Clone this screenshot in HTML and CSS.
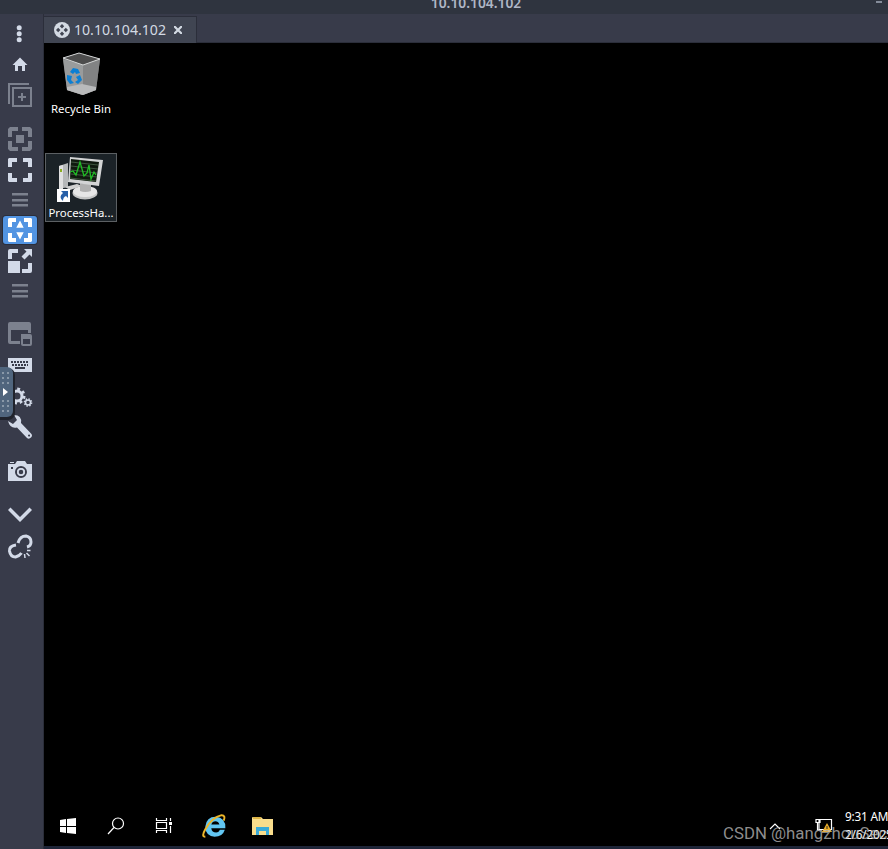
FILE: index.html
```html
<!DOCTYPE html>
<html>
<head>
  <meta charset="utf-8">
  <title>10.10.104.102</title>
  <link rel="stylesheet" href="styles.css">
</head>
<body>
  <div class="window">
    <div class="titlebar">
      <span class="title">10.10.104.102</span>
      <i class="minimize"></i>
    </div>
    <div class="content">
      <div class="sidebar">
        <div class="group">
          <svg class="tool" viewBox="0 0 24 24"><circle cx="11.200" cy="6.800" r="2.500"/><circle cx="11.200" cy="12.800" r="2.500"/><circle cx="11.200" cy="18.700" r="2.500"/></svg>
          <svg class="tool" viewBox="0 0 24 24"><path d="M12 5.500 19.500 13H17v6h-3v-5h-4v5H7v-6H4.500z"/></svg>
          <svg class="tool dim" viewBox="0 0 24 24"><path d="M0 0h21v2H2v19H0zM4 4h20v20H4zM6 6v16h16V6zM13 10h2v3h3v2h-3v3h-2v-3h-3v-2h3z" fill-rule="evenodd"/></svg>
        </div>
        <div class="group">
          <svg class="tool dim" viewBox="0 0 24 24"><path d="M2 0h8v4H4v6H0V2zM14 0h8l2 2v8h-4V4h-6zM0 14h4v6h6v4H2l-2-2zM20 14h4v8l-2 2h-8v-4h6zM8 8h8v8H8z"/></svg>
          <svg class="tool" viewBox="0 0 24 24"><path d="M1 0h8v4H4v5H0V1zM15 0h8l1 1v8h-4V4h-5zM0 15h4v5h5v4H1l-1-1zM20 15h4v8l-1 1h-8v-4h5z"/></svg>
          <i class="handle"></i>
          <div class="active">
            <svg class="tool" viewBox="0 0 24 24"><path d="M1 0h7v4H4v5H0V1zM16 0h7l1 1v8h-4V4h-4zM0 15h4v5h4v4H1l-1-1zM20 15h4v8l-1 1h-7v-4h4zM12 2.500l3.700 7.300H8.300zM12 21.500l3.700-7.300H8.300z"/></svg>
          </div>
          <svg class="tool" viewBox="0 0 24 24"><path d="M0 12h12v12H0zM0 2q0-2 2-2h8v4H4v6H0zM16 0h8v8l-2.500-2.500-5 5-3-3 5-5zM20 14h4v8q0 2-2 2h-8v-4h6z"/></svg>
          <i class="handle"></i>
        </div>
        <div class="group">
          <svg class="tool dim" viewBox="0 0 24 24"><path d="M2 0h19q2 0 2 2v9h-3V8H3v11h9v3H2q-2 0-2-2V2q0-2 2-2zM13 12h9q2 0 2 2v8q0 2-2 2h-7q-2 0-2-2zM15 17v5h7v-5z" fill-rule="evenodd"/></svg>
          <svg class="tool" viewBox="0 0 24 24"><path d="M0 5h24v14H0z"/><path class="cut" d="M3 9h18M4 12h16" stroke-dasharray="2 1"/><path class="cut" d="M7 15h10"/></svg>
          <svg class="tool" viewBox="0 0 24 24"><circle class="line" cx="9" cy="12" r="5"/><circle class="line" cx="9" cy="12" r="7" stroke-dasharray="2.750 2.750"/><circle class="line thin" cx="20" cy="18.500" r="2.500"/><circle class="line thin" cx="20" cy="18.500" r="3.600" stroke-dasharray="1.400 1.430"/></svg>
          <svg class="tool" viewBox="0 0 24 24"><path d="M6 0q8 0 7 8l10 10.500q2 2 0 4-2 2-4 .5L9 12.500Q2 14 0 6l5 3 4-4zM21 19.500a1 1 0 1 0 .1 0z" fill-rule="evenodd"/></svg>
        </div>
        <div class="group">
          <svg class="tool" viewBox="0 0 24 24"><path d="M0 5h7l2-3h8l2 3h5v17H0zM2 3h4v1H2z"/><circle class="cut" cx="13" cy="13" r="5"/><circle class="cut core" cx="13" cy="13" r="3"/><path class="cut" d="M3 9h2"/></svg>
        </div>
        <div class="group">
          <svg class="tool" viewBox="0 0 24 24"><path d="M0 7l2.500-2.500L12 14l9.500-9.500L24 7 12 19z"/></svg>
          <svg class="tool" viewBox="0 0 24 24"><path class="link" d="M10 9q2-7 8-7 5 1 5 6 0 4-4 5M8 11q-7 1-6.500 6 1 6 6 6 4-1 6-4"/><path class="line thin" d="M16.500 20l.5 4M18.500 19l3 3M19 16.500h3.500"/></svg>
        </div>
        <div class="drawer">
          <i class="grip"></i><i class="arrow"></i><i class="grip"></i>
        </div>
      </div>
      <div class="main">
        <div class="tabs">
          <div class="tab">
            <svg class="tab-icon" viewBox="0 0 16 16"><circle cx="8" cy="8" r="8"/><path d="M8 2l2.200 2.200L8 6.400 5.800 4.200zM8 9.600l2.200 2.200L8 14l-2.200-2.200zM4.200 5.800L6.400 8l-2.200 2.200L2 8zM11.800 5.800L14 8l-2.200 2.200L9.600 8z"/></svg>
            <span class="tab-name">10.10.104.102</span>
            <svg class="close" viewBox="0 0 8 8"><path d="M0 0l8 8M8 0L0 8"/></svg>
          </div>
        </div>
        <div class="desktop">
          <div class="shortcuts">
            <div class="shortcut">
              <svg class="bin" viewBox="0 0 40 44">
                <path d="M1 6l16-5 21 6-4 31-14 5-15-5z" fill="#77797a"/>
                <path d="M1 6l16-5 21 6-17 6z" fill="#4d4d4d"/>
                <path d="M1 7l20 6v30L5 38z" fill="#999b9c"/>
                <path d="M21 13l17-6-4 31-13 5z" fill="#828384"/>
                <path d="M5 35l15-3 14 3v3l-13 5-16-5z" fill="#b9babb"/>
                <path d="M1 6l16-5 21 6-17 6z" fill="none" stroke="#d3d5d5"/>
                <path d="M8 20l3-4 5 1 2 4-4 1-1-2-2 2zM5 23l5 1-1 4 3 3-4 1-3-4zM14 25l4-2 2 5-4 4-3-2 3-2z" fill="#0b7fd4"/>
              </svg>
              <span>Recycle Bin</span>
            </div>
            <div class="shortcut selected">
              <svg class="monitor" viewBox="0 0 48 48">
                <path d="M2 11l9-3v24l-9 2z" fill="#b6b8b9"/>
                <path d="M2 11l4-1v24H2z" fill="#e0e0e0"/>
                <path d="M3 14h2v3H3z" fill="#8bad23"/>
                <path d="M8 32l12-3 5 2-12 4z" fill="#d0d0d0"/>
                <ellipse cx="28" cy="38" rx="12.500" ry="6.500" fill="#c4c5c5"/>
                <ellipse cx="28" cy="36.500" rx="12" ry="5.500" fill="#e6e6e6"/>
                <path d="M23 28l11 1v7q-6 2-11 0z" fill="#b0b0b0"/>
                <path d="M13 2l33 3-4 26-31-4z" fill="#d3d4d5"/>
                <path d="M14 4l28 3-3 20-26-3z" fill="#10190f"/>
                <path d="M14 7l27 3M14 11l27 3M14 15l26 3M14 19l26 3M13 23l26 3" fill="none" stroke="#3f553f"/>
                <path d="M13 17l3-1 3 4 4-13 4 14 3-3 2-8 2 14 3-7 2 3" fill="none" stroke="#20be25" stroke-width="1.300"/>
                <path d="M0 34h13v13H0z" fill="#fff"/>
                <path d="M4 36l7 0v7l-2-2q-3 1-3 5-5-4 0-8z" fill="#2860a8"/>
              </svg>
              <span>ProcessHa...</span>
            </div>
          </div>
          <div class="taskbar">
            <svg class="app" viewBox="0 0 24 24"><path d="M4 6l6-1v7H4zM11 5l9-1v8h-9zM4 13h6v6l-6-1zM11 13h9v7l-9-1z" fill="#fff"/></svg>
            <svg class="app" viewBox="0 0 24 24"><path d="M10 13.500L4 20" class="outline"/><circle cx="14" cy="9.500" r="5.500" class="outline"/></svg>
            <svg class="app" viewBox="0 0 24 24"><path d="M4.500 4v2.500h10V4M4.500 19v-2.500h10V19M4.500 8.500h10v6h-10zM18.500 4v3M18.500 12v7" class="outline"/><path d="M17 8h3v3h-3z" fill="#fff"/></svg>
            <svg class="app ie" viewBox="0 0 24 24"><path d="M22 15.500q-2 6.500-9.500 6.500-8.500-1-8.500-9.500 1-9 9.500-9 9.500 1 9 10.500H9.500q.5 4 4.500 4 2.500 0 3.500-2.500zM9.500 10.500h7.500q-1-3-3.700-3t-3.800 3z" fill="#62c6f2" fill-rule="evenodd"/><path d="M4 22q-4 0 0-7Q10 4 19 2q4 0 2 5" fill="none" stroke="#edb629" stroke-width="1.800"/></svg>
            <svg class="app" viewBox="0 0 24 24"><path d="M1 4q0-1 1-1h8l2 2h10v16H1z" fill="#f9dd8c"/><path d="M2 3h8v2H2z" fill="#deb648"/><path d="M5 13h13v8h-3v-4H8v4H5z" fill="#39abd9"/></svg>
            <div class="tray">
              <svg class="chevron" viewBox="0 0 12 7"><path d="M1 6l5-5 5 5" class="outline"/></svg>
              <svg class="network" viewBox="0 0 18 16"><path d="M4 1.500h12.500v10H4zM1 1.500h4v3H1zM2.500 5v7h4M7 14h6" class="outline"/><path d="M12 5l5 9H7z" fill="#e9ac29"/><path d="M12 8v3M12 12v1" stroke="#222"/></svg>
              <div class="clock">
                <span>9:31 AM</span>
                <span>2/6/2025</span>
              </div>
            </div>
          </div>
          <span class="watermark">CSDN @hangzhouSec</span>
        </div>
        <div class="bottom"></div>
      </div>
    </div>
  </div>
</body>
</html>
```

FILE: styles.css
```css
* {
  box-sizing: border-box;
}
body {
  margin: 0;
  overflow: hidden;
  background: #383b4a;
  font-family: "Noto Sans", sans-serif;
}
.window {
  display: flex;
  flex-direction: column;
  width: 888px;
  height: 849px;
  overflow: hidden;
}
.titlebar {
  display: flex;
  flex: none;
  height: 14px;
  padding-left: 64px;
  justify-content: center;
  background: #2f343f;
  position: relative;
  overflow: hidden;
}
.title {
  margin-top: -7px;
  color: #b0b7c6;
  font-size: 13.8px;
  font-weight: 600;
  line-height: 20px;
}
.minimize {
  position: absolute;
  top: 1px;
  right: 6px;
  width: 6px;
  height: 2px;
  background: #858c9a;
}
.content {
  display: flex;
  flex: 1;
  min-height: 0;
}
.sidebar {
  position: relative;
  display: flex;
  flex: none;
  flex-direction: column;
  gap: 20px;
  width: 44px;
  padding: 7px 0 0 8px;
  border-right: 1px solid #2b2e3a;
}
.group {
  display: flex;
  flex-direction: column;
  gap: 7px;
}
.tool {
  display: block;
  width: 24px;
  height: 24px;
  fill: #d3dae8;
  overflow: visible;
}
.tool.dim {
  fill: #7c818e;
}
.tool .line, .tool .link {
  fill: none;
  stroke: #d3dae8;
  stroke-width: 3;
}
.tool .thin {
  stroke-width: 1.5;
}
.tool .cut {
  fill: none;
  stroke: #383b4a;
  stroke-width: 2;
}
.tool .core {
  stroke-width: 1.5;
  fill: #383b4a;
  stroke: #d3dae8;
}
.handle {
  width: 16px;
  height: 22px;
  margin-left: 4px;
  background: linear-gradient(#7c818e 0 0) 0 4px / 16px 2.5px no-repeat,
    linear-gradient(#7c818e 0 0) 0 10px / 16px 2.5px no-repeat,
    linear-gradient(#7c818e 0 0) 0 15px / 16px 2.5px no-repeat;
}
.active {
  width: 34px;
  margin: -2px 0 -2px -5px;
  padding: 2px 5px;
  border-radius: 3px;
  background: #5294e2;
  box-shadow: 0 0 0 1px #2b2e3a;
}
.active .tool {
  fill: #fff;
}
.drawer {
  position: absolute;
  top: 353px;
  left: 0;
  display: flex;
  flex-direction: column;
  justify-content: center;
  align-items: center;
  gap: 4px;
  width: 13px;
  height: 50px;
  padding-right: 3px;
  border-radius: 0 6px 6px 0;
  background: #50657d;
  box-shadow: 1px 2px 0 1px #20232c;
}
.grip {
  width: 7px;
  height: 12px;
  background: radial-gradient(circle at 1px 1px, #8998a8 1px, transparent 1.1px) 0 0 / 5px 5px;
}
.arrow {
  border: 4px solid transparent;
  border-left: 5px solid #fff;
  border-right: 0;
}
.main {
  display: flex;
  flex: 1;
  flex-direction: column;
  min-width: 0;
}
.tabs {
  display: flex;
  flex: none;
  height: 29px;
  padding-top: 2px;
  border-bottom: 1px solid #2b2e3a;
}
.tab {
  display: flex;
  align-items: center;
  width: 153px;
  height: 27px;
  padding: 0 0 0 10px;
  border: 1px solid #2b2e3a;
  border-width: 1px 1px 0 0;
  background: #404552;
  color: #d3dae3;
  font-size: 14.1px;
}
.tab-icon {
  width: 16px;
  height: 16px;
  margin-right: 4px;
  fill: #d3dae3;
}
.tab-icon path {
  fill: #404552;
}
.tab-name {
  padding-bottom: 2px;
}
.close {
  width: 8px;
  height: 8px;
  margin-left: 8px;
  stroke: #d3dae3;
  stroke-width: 2.2;
}
.desktop {
  position: relative;
  display: flex;
  flex: 1;
  flex-direction: column;
  justify-content: space-between;
  background: #000;
  overflow: hidden;
}
.shortcuts {
  display: flex;
  flex-direction: column;
  gap: 34px;
  padding: 7px 0 0 1px;
}
.shortcut {
  display: flex;
  flex-direction: column;
  align-items: center;
  width: 72px;
  height: 69px;
  color: #fff;
  font-size: 11.4px;
  line-height: 16px;
  white-space: nowrap;
}
.selected {
  border: 1px solid #5c6063;
  background: #1b2227;
}
.bin {
  width: 40px;
  height: 44px;
  margin: 2px 0 5px 1px;
}
.monitor {
  width: 48px;
  height: 48px;
  margin: 1px 0 2px;
}
.taskbar {
  display: flex;
  align-items: center;
  height: 40px;
  padding-left: 12px;
  gap: 24px;
}
.app {
  flex: none;
  width: 24px;
  height: 24px;
}
.ie {
  width: 26px;
  height: 26px;
  margin: 0 0 0 1px;
}
.outline {
  fill: none;
  stroke: #fff;
  stroke-width: 1.2;
}
.tray {
  display: flex;
  flex: none;
  align-items: center;
  margin-left: auto;
  margin-right: -8px;
}
.chevron {
  width: 12px;
  height: 7px;
  margin-right: 34px;
}
.network {
  width: 18px;
  height: 16px;
  margin-right: 12px;
}
.clock {
  display: flex;
  flex-direction: column;
  align-items: flex-start;
  width: 51px;
  padding-bottom: 2px;
  color: #fff;
  font-size: 11.8px;
  letter-spacing: -0.2px;
  line-height: 18px;
  white-space: nowrap;
}
.watermark {
  position: absolute;
  left: 679px;
  bottom: 2px;
  color: rgba(190, 190, 190, .75);
  font-family: Roboto, sans-serif;
  font-size: 16.8px;
  line-height: 22px;
  white-space: nowrap;
}
.bottom {
  flex: none;
  height: 3px;
  background: #1e2538;
}
```
